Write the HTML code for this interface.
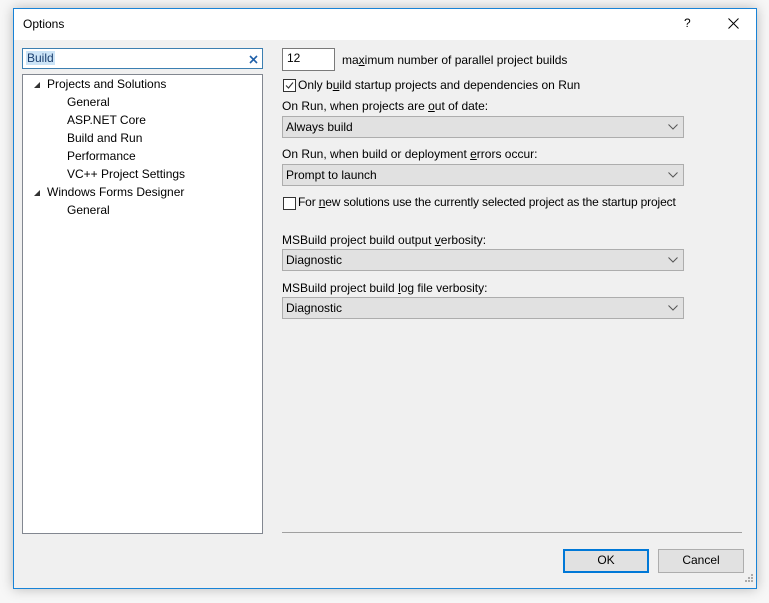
<!DOCTYPE html>
<html><head><style>
body{margin:0;width:769px;height:603px;background:#f7f7f7;position:relative;overflow:hidden;font-family:"Segoe UI","Liberation Sans",sans-serif;font-size:12px;color:#000}
.win{position:absolute;left:13px;top:8px;width:742px;height:579px;border:1px solid #1883d7;background:#f0f0f0;box-shadow:0 0 12px rgba(0,0,0,.25)}
.title{position:absolute;left:0;top:0;width:742px;height:31px;background:#fff}
.a{position:absolute;white-space:nowrap}
.box{position:absolute;background:#fff;border:1px solid #7a7a7a;box-sizing:border-box}
.cb{position:absolute;width:13px;height:13px;border:1px solid #333;background:#fff;box-sizing:border-box}
.dd{position:absolute;left:268px;width:402px;height:22px;background:#e1e1e1;border:1px solid #adadad;box-sizing:border-box}
.dd span{position:absolute;left:3px;top:3px}
.dd svg{position:absolute;right:5px;top:7px}
.btn{position:absolute;height:24px;background:#e1e1e1;border:1px solid #adadad;box-sizing:border-box;text-align:center;line-height:21px}
u{text-decoration:underline}
</style></head><body>
<div class="win">
<div class="title"></div>
<div class="a" style="left:9px;top:8px;font-size:12px">Options</div>
<div class="a" style="left:670px;top:7px">?</div>
<svg class="a" style="left:714px;top:9px" width="11" height="11"><path d="M0.5 0.5L10.5 10.5M10.5 0.5L0.5 10.5" stroke="#000" stroke-width="1"/></svg>
<div class="box" style="left:8px;top:39px;width:241px;height:21px;border-color:#3c7fb1"></div>
<div class="a" style="left:12px;top:42px;background:#cce4f7;padding:0 1px;color:#1a3e6e">Build</div>
<svg class="a" style="left:235px;top:46px" width="9" height="9"><path d="M1 1L8 8M8 1L1 8" stroke="#1e5fa8" stroke-width="1.6"/></svg>
<div class="box" style="left:8px;top:65px;width:241px;height:460px;border-color:#828790"></div>
<svg class="a" style="left:20px;top:73px" width="7" height="7"><path d="M6 0L6 6L0 6Z" fill="#333"/></svg>
<div class="a" style="left:33px;top:68px">Projects and Solutions</div>
<div class="a" style="left:53px;top:86px">General</div>
<div class="a" style="left:53px;top:104px">ASP.NET Core</div>
<div class="a" style="left:53px;top:122px">Build and Run</div>
<div class="a" style="left:53px;top:140px">Performance</div>
<div class="a" style="left:53px;top:158px">VC++ Project Settings</div>
<svg class="a" style="left:20px;top:181px" width="7" height="7"><path d="M6 0L6 6L0 6Z" fill="#333"/></svg>
<div class="a" style="left:33px;top:176px">Windows Forms Designer</div>
<div class="a" style="left:53px;top:194px">General</div>

<div class="box" style="left:268px;top:39px;width:53px;height:23px;border-color:#7a7a7a"></div>
<div class="a" style="left:273px;top:42px">12</div>
<div class="a" style="left:328px;top:44px">ma<u>x</u>imum number of parallel project builds</div>
<div class="cb" style="left:269px;top:70px"></div>
<svg class="a" style="left:270px;top:71px" width="11" height="11"><path d="M2 5.5L4.5 8L9 2.5" stroke="#333" fill="none" stroke-width="1.1"/></svg>
<div class="a" style="left:284px;top:69px">Only b<u>u</u>ild startup projects and dependencies on Run</div>
<div class="a" style="left:268px;top:90px">On Run, when projects are <u>o</u>ut of date:</div>
<div class="dd" style="top:107px"><span>Always build</span><svg width="10" height="6"><path d="M0.5 0.5L5 5L9.5 0.5" stroke="#555" fill="none"/></svg></div>
<div class="a" style="left:268px;top:138px">On Run, when build or deployment <u>e</u>rrors occur:</div>
<div class="dd" style="top:155px"><span>Prompt to launch</span><svg width="10" height="6"><path d="M0.5 0.5L5 5L9.5 0.5" stroke="#555" fill="none"/></svg></div>
<div class="cb" style="left:269px;top:188px"></div>
<div class="a" style="left:284px;top:186px;letter-spacing:-0.15px">For <u>n</u>ew solutions use the currently selected project as the startup project</div>
<div class="a" style="left:268px;top:224px">MSBuild project build output <u>v</u>erbosity:</div>
<div class="dd" style="top:240px"><span>Diagnostic</span><svg width="10" height="6"><path d="M0.5 0.5L5 5L9.5 0.5" stroke="#555" fill="none"/></svg></div>
<div class="a" style="left:268px;top:272px">MSBuild project build <u>l</u>og file verbosity:</div>
<div class="dd" style="top:288px"><span>Diagnostic</span><svg width="10" height="6"><path d="M0.5 0.5L5 5L9.5 0.5" stroke="#555" fill="none"/></svg></div>

<div class="a" style="left:268px;top:523px;width:460px;height:1px;background:#a0a0a0"></div>
<div class="btn" style="left:549px;top:540px;width:86px;border:2px solid #0078d7;line-height:19px">OK</div>
<div class="btn" style="left:644px;top:540px;width:86px">Cancel</div>
<svg class="a" style="left:731px;top:565px" width="9" height="9"><g fill="#aaa"><rect x="6" y="0" width="2" height="2"/><rect x="3" y="3" width="2" height="2"/><rect x="6" y="3" width="2" height="2"/><rect x="0" y="6" width="2" height="2"/><rect x="3" y="6" width="2" height="2"/><rect x="6" y="6" width="2" height="2"/></g></svg>
</div>
</body></html>
